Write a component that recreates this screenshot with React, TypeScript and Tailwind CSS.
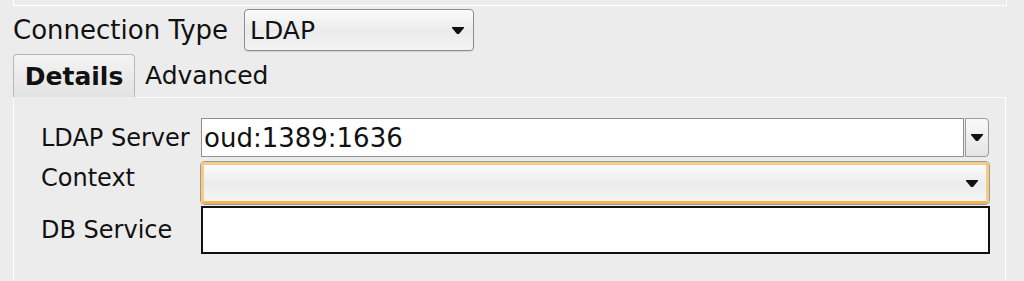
const font = "font-['DejaVu_Sans','Liberation_Sans',sans-serif]";

function Arrow() {
  return (
    <svg width="12" height="7" viewBox="0 0 12 7" className="block">
      <path d="M0 0H12V1L7 7H5L0 1Z" fill="#111" />
    </svg>
  );
}

export default function App() {
  return (
    <div className={`w-[1024px] h-[281px] bg-[#ececec] overflow-hidden text-[#111] ${font}`}>
      {/* bottom edge of the panel above */}
      <div className="ml-[13px] w-[994px] h-[6px] border-x border-b border-white" />

      {/* Connection Type */}
      <div className="flex items-center h-[42px] mt-[3px] pl-[13px]">
        <span className="text-[26px] leading-none">Connection Type</span>
        <div className="ml-[16px] w-[230px] h-[42px] rounded-[4px] border border-[#8c8c8c] bg-gradient-to-b from-[#fbfbfb] via-[#ebebeb] to-[#f3f3f3] flex items-center justify-between pl-[5px] pr-[9px] shadow-[0_1px_0_#d4d4d4]">
          <span className="text-[25px] leading-none">LDAP</span>
          <Arrow />
        </div>
      </div>

      {/* Tabs */}
      <div className="flex items-end h-[43px] mt-[3px]">
        <div className="ml-[13px] w-[122px] h-[43px] rounded-t-[4px] border border-b-0 border-[#b8b8b8] bg-gradient-to-b from-[#f4f4f4] to-[#e2e2e2] flex items-center justify-center">
          <span className="text-[25px] font-bold leading-none">Details</span>
        </div>
        <div className="flex-1 h-[43px] flex items-center">
          <span className="ml-[10px] text-[25px] leading-none">Advanced</span>
        </div>
      </div>

      {/* Tab content */}
      <div className="relative ml-[13px] w-[993px] h-[200px] border-l border-r border-white">
        <div className="ml-[122px] h-px bg-white" />
        <div className="pt-[20px] pl-[27px] pr-[16px] flex flex-col">
          <div className="flex items-center h-[39px]">
            <span className="w-[160px] text-[24px] leading-none">LDAP Server</span>
            <div className="flex-1 flex h-[39px]">
              <div className="flex-1 border border-[#8f8f8f] bg-white flex items-center pl-[2px]">
                <span className="text-[26px] leading-none">oud:1389:1636</span>
              </div>
              <div className="w-[24px] ml-[1px] rounded-r-[4px] border border-[#9a9a9a] bg-gradient-to-b from-[#fafafa] to-[#e4e4e4] flex items-center justify-center">
                <Arrow />
              </div>
            </div>
          </div>

          <div className="flex items-center h-[42px] mt-[5px]">
            <span className="w-[160px] text-[24px] leading-none -mt-[10px]">Context</span>
            <div className="flex-1 h-[42px] rounded-[4px] border-[3px] border-[#f6cc84] border-b-[#f0b54f] bg-gradient-to-b from-[#fcfcfc] via-[#ececec] to-[#f4f4f4] flex items-center justify-end pr-[8px] shadow-[0_0_0_1px_#9a9a9a]">
              <Arrow />
            </div>
          </div>

          <div className="flex items-center h-[48px] mt-[2px]">
            <span className="w-[160px] text-[24px] leading-none">DB Service</span>
            <div className="flex-1 h-[48px] mr-[-1px] border-2 border-[#111] bg-white" />
          </div>
        </div>
      </div>
    </div>
  );
}
